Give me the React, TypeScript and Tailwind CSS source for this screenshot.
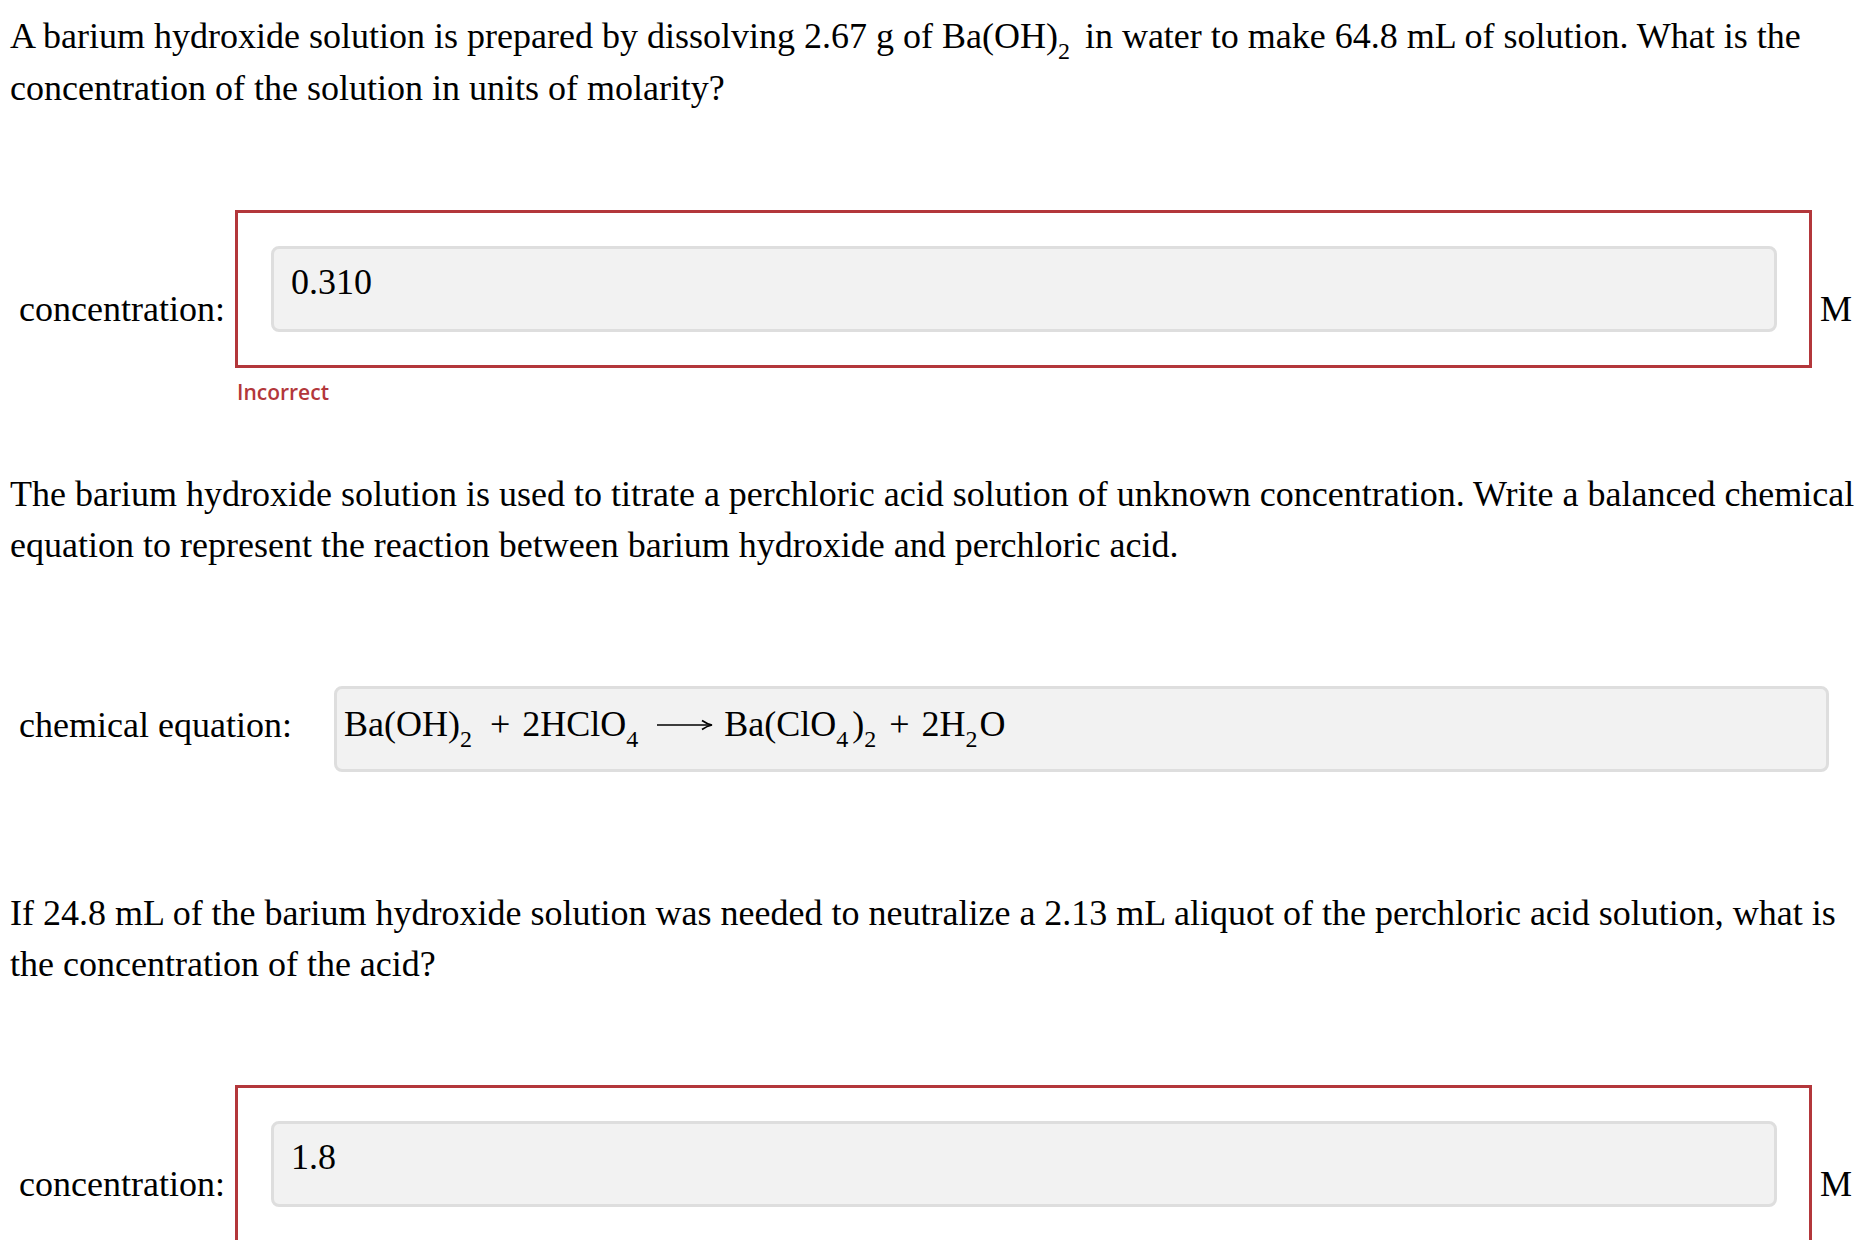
import React from "react";

function Sub({ children, className = "" }: { children: React.ReactNode; className?: string }) {
  return <span className={`text-[24px] leading-none align-[-11px] ${className}`}>{children}</span>;
}

function AnswerRow({ value, className = "" }: { value: string; className?: string }) {
  return (
    <div className={`flex items-start pl-[9px] pr-[24px] ${className}`}>
      <div className="w-[216px] shrink-0 pt-[74px]">concentration:</div>
      <div className="flex-1 border-[3px] border-[#b3373b] pt-[33px] pb-[33px] pl-[33px] pr-[32px]">
        <div className="h-[86px] rounded-[8px] border-[3px] border-[#dedede] bg-[#f2f2f2] pl-[17px] pt-[8px]">
          {value}
        </div>
      </div>
      <div className="ml-[8px] pt-[74px]">M</div>
    </div>
  );
}

function Arrow() {
  return (
    <svg width="56" height="16" viewBox="0 0 56 16" className="inline-block align-[3px] ml-[19px] mr-[11px]">
      <line x1="0" y1="8" x2="54" y2="8" stroke="#000" strokeWidth="1.6" />
      <path d="M45 3.5 Q50 7 55 8 Q50 9 45 12.5" fill="none" stroke="#000" strokeWidth="1.6" />
    </svg>
  );
}

export default function App() {
  return (
    <div className="min-h-screen bg-white pl-[10px] pt-[11px] font-['Liberation_Serif','Times_New_Roman',serif] text-[36px] leading-[51px] text-black">
      <p>
        A barium hydroxide solution is prepared by dissolving 2.67 g of Ba(OH)<Sub className="mr-[6px]">2</Sub> in water
        to make 64.8 mL of solution. What is the concentration of the solution in units of molarity?
      </p>

      <AnswerRow className="mt-[96px]" value="0.310" />
      <div className="mt-[9px] ml-[227px] font-['Open_Sans',sans-serif] text-[21px] leading-[30px] font-semibold text-[#b3373b]">
        Incorrect
      </div>

      <p className="mt-[62px]">
        The barium hydroxide solution is used to titrate a perchloric acid solution of unknown concentration. Write a
        balanced chemical equation to represent the reaction between barium hydroxide and perchloric acid.
      </p>

      {/* chemical equation */}
      <div className="mt-[115px] flex items-start pl-[9px] pr-[47px]">
        <div className="w-[315px] shrink-0 pt-[14px]">chemical equation:</div>
        <div className="h-[86px] flex-1 whitespace-nowrap rounded-[8px] border-[3px] border-[#dedede] bg-[#f2f2f2] pl-[7px] pt-[10px]">
          Ba(OH)<Sub>2</Sub>
          <span className="ml-[18px] mr-[12px]">+</span>
          2HClO<Sub>4</Sub>
          <Arrow />
          Ba(ClO<Sub className="mr-[4px]">4</Sub>)<Sub>2</Sub>
          <span className="ml-[13px] mr-[12px]">+</span>
          2H<Sub className="mr-[2px]">2</Sub>O
        </div>
      </div>

      <p className="mt-[116px]">
        If 24.8 mL of the barium hydroxide solution was needed to neutralize a 2.13 mL aliquot of the perchloric acid
        solution, what is the concentration of the acid?
      </p>

      <AnswerRow className="mt-[95px]" value="1.8" />
    </div>
  );
}
